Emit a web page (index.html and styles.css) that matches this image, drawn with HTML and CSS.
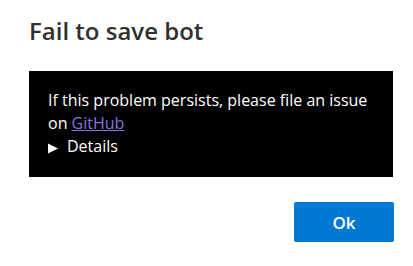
FILE: index.html
```html
<!DOCTYPE html>
<html>
<head>
<meta charset="utf-8">
<link rel="stylesheet" href="styles.css">
</head>
<body>
<div class="dialog">
  <h1 class="title">Fail to save bot</h1>
  <div class="message">
    <div class="line">If this problem persists, please file an issue on <a class="link" href="#">GitHub</a></div>
    <details class="details">
      <summary class="summary"><svg class="marker" width="10" height="11" viewBox="0 0 10 11"><path d="M0 0.5 L10 5.5 L0 10.5 Z" fill="#ffffff"/></svg>Details</summary>
    </details>
  </div>
  <div class="footer">
    <button class="ok">Ok</button>
  </div>
</div>
</body>
</html>
```
FILE: styles.css
```css
html, body {
  margin: 0;
  padding: 0;
  background: #ffffff;
}
.dialog {
  width: 413px;
  height: 266px;
  box-sizing: border-box;
  padding: 17px 19px 0 29px;
  font-family: "Open Sans", sans-serif;
}
.title {
  margin: 0;
  font-size: 24px;
  font-weight: 600;
  line-height: 28px;
  color: #323130;
}
.message {
  margin-top: 26px;
  margin-right: 1px;
  background: #000000;
  color: #ffffff;
  padding: 18px 19px 19px 19px;
  font-size: 16px;
  line-height: 23px;
}
.link {
  color: #8378de;
  text-decoration: underline;
}
.details {
  margin: 0;
}
.summary {
  list-style: none;
  display: flex;
  align-items: center;
  cursor: pointer;
}
.summary::-webkit-details-marker {
  display: none;
}
.marker {
  flex-shrink: 0;
  margin: 3px 9px 0 0;
}
.footer {
  display: flex;
  justify-content: flex-end;
  margin-top: 25px;
}
.ok {
  width: 100px;
  height: 40px;
  border: none;
  border-radius: 2px;
  background: #0078d4;
  color: #ffffff;
  font-family: "Open Sans", sans-serif;
  font-size: 17px;
  font-weight: 600;
  padding: 0;
}
```
